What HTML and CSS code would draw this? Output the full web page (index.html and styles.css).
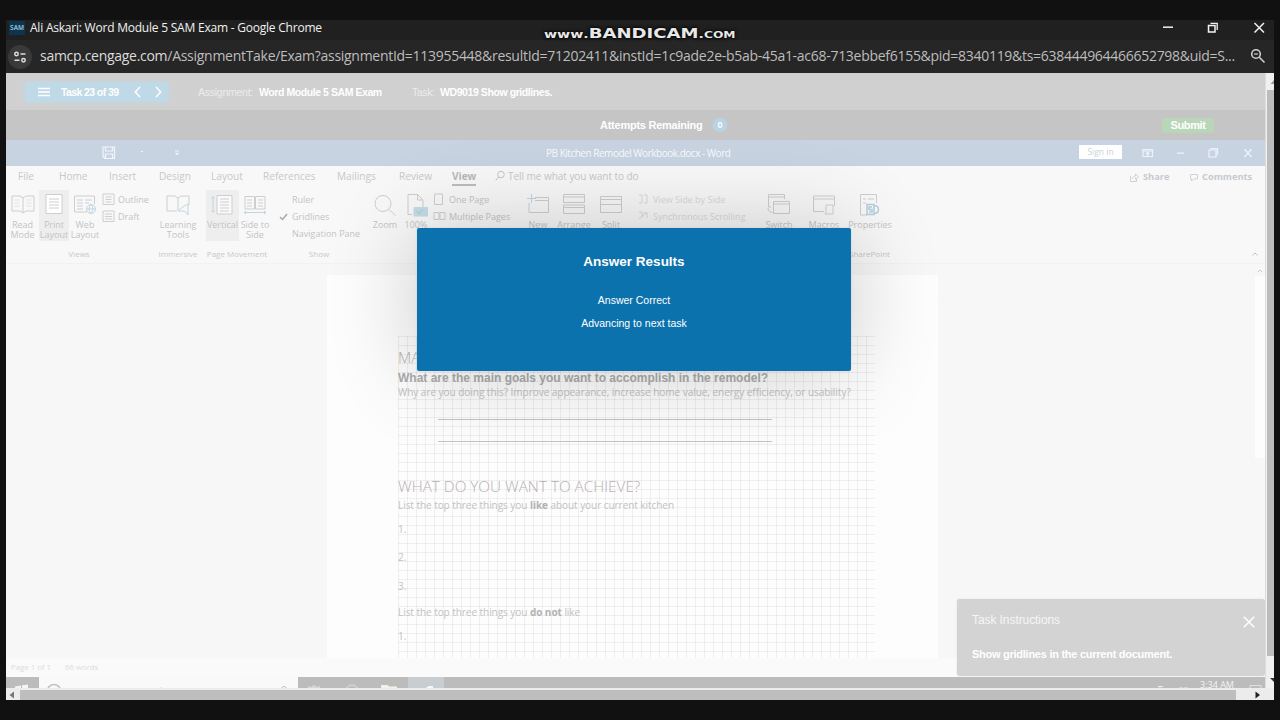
FILE: index.html
```html
<!DOCTYPE html>
<html lang="en">
<head>
<meta charset="utf-8">
<title>Ali Askari: Word Module 5 SAM Exam</title>
<link rel="stylesheet" href="styles.css">
</head>
<body>
<div class="window">
  <div class="titlebar">
    <span class="favicon">SAM</span>
    <span class="wintitle">Ali Askari: Word Module 5 SAM Exam - Google Chrome</span>
    <svg class="winctl" width="110" height="20" fill="none" stroke="#f2f2f2" stroke-width="1.5"><path d="M6 7.2h10"/><path d="M51.500 5.500h6.500v6.500h-6.500z"/><path d="M53.500 3.300h6.700v6.700" stroke-width="1.300"/><path d="M97.500 3l9.500 9.500M107 3l-9.500 9.500"/></svg>
  </div>
  <div class="addressbar">
    <span class="siteinfo"><svg width="14" height="14" fill="none" stroke="#ddd" stroke-width="1.500"><circle cx="3.500" cy="4" r="1.700"/><path d="M7.500 4h5M1.500 10.300h5"/><circle cx="10.500" cy="10.300" r="1.700"/></svg></span>
    <span class="url"><b>samcp.cengage.com</b>/AssignmentTake/Exam?assignmentId=113955448&amp;resultId=71202411&amp;instId=1c9ade2e-b5ab-45a1-ac68-713ebbef6155&amp;pid=8340119&amp;ts=638444964466652798&amp;uid=S...</span>
    <svg class="zoomout" width="16" height="16" fill="none" stroke="#cfcfcf" stroke-width="1.600"><circle cx="6" cy="6" r="4.300"/><path d="M9.300 9.300l5.200 5.200"/><path d="M4 6h4" stroke-width="1.200"/></svg>
  </div>
  <div class="viewport">
    <div class="content">
      <header class="taskbar">
        <div class="tasknav">
          <svg width="12" height="10" stroke="#fff" stroke-width="1.400"><path d="M0 1.500h12M0 5h12M0 8.500h12"/></svg>
          <b>Task 23 of 39</b>
          <svg width="28" height="12" fill="none" stroke="#fff" stroke-width="1.500"><path d="M6 1L1.300 6 6 11M22 1l4.700 5L22 11"/></svg>
        </div>
        <span class="t-label a1">Assignment:</span><b class="t-val v1">Word Module 5 SAM Exam</b>
        <span class="t-label a2">Task:</span><b class="t-val v2">WD9019 Show gridlines.</b>
      </header>
      <div class="attempts">
        <b class="att-text">Attempts Remaining</b><b class="att-num">0</b><b class="submit">Submit</b>
      </div>
      <div class="wordtitle">
        <svg class="save" width="80" height="14" fill="none" stroke="#f1f6fb" stroke-width="1.200"><path d="M1 1h11.500v11.500H3L1 10.500zM3.500 1v4h7V1M3.500 12.500V8h7v4.500"/><path d="M39 5.500h2M73 5h4M73.500 7l1.500 1.500L76.500 7"/></svg>
        <span class="docname">PB Kitchen Remodel Workbook.docx - Word</span>
        <span class="signin">Sign in</span>
        <svg class="wctl" width="112" height="12" fill="none" stroke="#eef3f9" stroke-width="1.200"><path d="M1 2.500h9.500v7H1zM1 4h9.500M5.700 9V5.500M4 7l1.700-1.700L7.400 7M35 6.200h7M67 3h7v7h-7zM69 3V1.500h6.500V8M102.500 2l7 8M109.500 2l-7 8"/></svg>
      </div>
      <nav class="tabs">
        <span>File</span><span>Home</span><span>Insert</span><span>Design</span><span>Layout</span><span>References</span><span>Mailings</span><span>Review</span><span class="active"><b>View</b></span>
        <span class="tell"><svg width="10" height="12" fill="none" stroke="#c4c6c6"><circle cx="6" cy="4.500" r="3.300"/><path d="M3.700 7L.7 10.500"/></svg>Tell me what you want to do</span>
        <b class="share"><svg width="9" height="9" fill="none" stroke="#ccd3dc"><path d="M.5 3v5.500h6V6M2.500 6c0-2 1-3 3-3V1l3 2.700-3 2.600V4.500"/></svg>Share</b>
        <b class="comments"><svg width="8" height="9" fill="none" stroke="#ccd3dc"><path d="M.5 1.500h7v4.500h-4l-2 2V6h-1z"/></svg>Comments</b>
      </nav>
      <div class="ribbon">
        <div class="btn w33"><svg width="24" height="22"><path d="M1 3h8l3 2 3-2h8v15h-8l-3 2-3-2H1zM12 5v15"/><path d="M3.500 7h5M3.500 10h5M3.500 13h5M15.500 7h5M15.500 10h5M15.500 13h5" class="lt"/></svg><span>Read<br>Mode</span></div>
        <div class="btn w30 sel"><svg width="24" height="22"><path d="M4 1.500h16v19H4z" fill="#fff"/><path d="M7 6h10M7 9h10M7 12h10M7 15h10"/></svg><span>Print<br>Layout</span></div>
        <div class="btn w32"><svg width="24" height="22"><path d="M14 19H1.500V3h20v8M4 7h6M4 10h6M4 13h6M4 16h6M12 7h7M12 10h4"/><circle cx="18" cy="16" r="4.500" class="bl"/><path d="M13.500 16h9M18 11.500c-2.500 3-2.500 6 0 9 2.500-3 2.500-6 0-9" class="bl"/></svg><span>Web<br>Layout</span></div>
        <div class="stack c1">
          <div><svg width="13" height="13"><path d="M1 1h11v10.500H1zM3.500 4h6M3.500 6.500h6M3.500 9h6" /></svg>Outline</div>
          <div><svg width="13" height="13"><path d="M1 1h11v10.500H1zM3 4h7M3 6.500h7M3 9h7"/></svg>Draft</div>
        </div>
        <div class="btn w36"><svg width="24" height="24"><path d="M1 3h8l3 2 3-2h8v9M1 3v15h10M12 5v12"/><path d="M22 11v11l-3.500-4H12l6-5z" class="bl"/></svg><span>Learning<br>Tools</span></div>
        <div class="btn w33 sel ml10"><svg width="24" height="22"><path d="M6 2.500h15v18.500H6z" fill="#fafafa"/><path d="M9 6h9M9 9h9M9 12h9M9 15h9M9 18h9"/><path d="M2 4v15M.5 5.500L2 3.500l1.500 2M.5 17.500l1.500 2 1.500-2" class="bl"/></svg><span>Vertical</span></div>
        <div class="btn w32"><svg width="24" height="22"><path d="M2 3.500h9.500v12.500H2zM12.500 3.500H22v12.500h-9.500zM4 7h5M4 10h5M4 13h5M15 7h5M15 10h5M15 13h5"/><path d="M1 19.500h22M3 18l-2 1.500L3 21M21 18l2 1.500-2 1.500" class="bl"/></svg><span>Side to<br>Side</span></div>
        <div class="checks">
          <div><svg width="9" height="9"></svg>Ruler</div>
          <div><svg width="9" height="9"><path d="M1 5l2.500 2.500L8 2" class="ck"/></svg>Gridlines</div>
          <div><svg width="9" height="9"></svg>Navigation Pane</div>
        </div>
        <div class="btn w26"><svg width="24" height="24"><circle cx="10" cy="10.500" r="8"/><path d="M16 16.500l6.500 6"/></svg><span>Zoom</span></div>
        <div class="btn w30 ml3"><svg width="24" height="24"><path d="M8 21.500H4v-20h9.500L19 7v7M13.500 1.500V7H19"/><path d="M10 14.500h14v8.500H10z" fill="#c3dce3" stroke="#c3dce3"/><path d="M13 18.500l2 2 4-4" stroke="#9ccbd6"/></svg><span>100%</span></div>
        <div class="stack c2">
          <div><svg width="13" height="13"><path d="M1.500 1h8v10.500h-8z"/></svg>One Page</div>
          <div><svg width="13" height="13"><path d="M1 2.500h5v7H1zM7 2.500h5v7H7z"/></svg>Multiple Pages</div>
        </div>
        <div class="btn w28"><svg width="24" height="24"><path d="M9 4.500h13.500v15H3V10M9 7.500h13.500"/><path d="M5.500 1v9M1 5.500h9" class="bl"/></svg><span>New</span></div>
        <div class="btn w36 ml4"><svg width="24" height="24"><path d="M1.500 1.500h21v8h-21zM1.500 12h21v8.500h-21zM1.500 4h21M1.500 14.500h21"/></svg><span>Arrange</span></div>
        <div class="btn w26 ml6"><svg width="24" height="24"><path d="M1.500 3.500h21v16h-21zM1.500 6.500h21M1.500 11.500h21"/></svg><span>Split</span></div>
        <div class="stack c3">
          <div><svg width="13" height="13"><path d="M2 2h3v8H2M7 2h3v8H7"/></svg>View Side by Side</div>
          <div><svg width="13" height="13"><path d="M2 2h3v5M7 3h3v5M2 9l8-7"/></svg>Synchronous Scrolling</div>
        </div>
        <div class="btn w30"><svg width="24" height="24"><path d="M4 14H1.500V1.500h16V6M1.500 4h16M6.500 8.500h16v12h-16zM6.500 11h16"/><path d="M1 15c0 3 2 4.500 4.500 4.500" class="bl"/></svg><span>Switch</span></div>
        <div class="btn w32 ml14"><svg width="24" height="24"><path d="M12 18.500H1.500V3h21v10M1.500 6h21"/><path d="M14 12h7v9h-8l1-2z" stroke="#d9cccc"/></svg><span>Macros</span></div>
        <div class="btn w44"><svg width="24" height="24"><path d="M9 22H2.500V1.500h16V10M5 6h3M10 6h6M5 10h3"/><path d="M9 11.500h7v10H9zM16 12.500c6 0 6 8 0 8M14 14h-3v2.500h3V19h-3" class="bl b2"/></svg><span>Properties</span></div>
      </div>
      <div class="groups">
        <span>Views</span><span>Immersive</span><span>Page Movement</span><span>Show</span><span class="sp">SharePoint</span>
        <svg width="8" height="6" fill="none" stroke="#c0c0c0"><path d="M1.500 4.500L4 2l2.500 2.500"/></svg>
      </div>
      <main class="canvas">
        <article class="page">
          <div class="gridarea">
            <h2 class="h-main">MAIN GOALS</h2>
            <h3>What are the main goals you want to accomplish in the remodel?</h3>
            <p class="why">Why are you doing this? Improve appearance, increase home value, energy efficiency, or usability?</p>
            <hr class="r1"><hr class="r2">
            <h2 class="h-ach">WHAT DO YOU WANT TO ACHIEVE?</h2>
            <p class="l1">List the top three things you <b>like</b> about your current kitchen</p>
            <p class="n1">1.</p><p class="n2">2.</p><p class="n3">3.</p>
            <p class="l2">List the top three things you <b>do not</b> like</p>
            <p class="n4">1.</p>
          </div>
        </article>
        <div class="docscroll"><svg width="10" height="10" fill="none" stroke="#c8c8c8"><path d="M3 6l2-2 2 2"/></svg><i></i></div>
      </main>
      <div class="status"><span>Page 1 of 1</span><span>66 words</span></div>
      <div class="ostask">
        <svg class="start" width="33" height="12"><path d="M9 9.500l6-1v4H9zM16 8.200l6-.8V12h-6z" fill="#f4f4f4"/></svg>
        <div class="search"><svg width="259" height="12" fill="none" stroke="#c2c2c2" stroke-width="1.500"><circle cx="15" cy="14" r="6.500"/><circle cx="245" cy="12" r="2.500" stroke-width="1"/><path d="M121 12l2-1" /></svg></div>
        <svg class="apps" width="200" height="12"><path d="M110 0h36v12h-36z" fill="#c7cdd1"/><path d="M10 9l3 1 3-2 3 2 3-1v3H10z" fill="#d8d8d8"/><circle cx="54" cy="14" r="6" fill="none" stroke="#cfd4d4" stroke-width="1.500"/><path d="M83 8h7l1 1.500h8V12H83z" fill="#f3f1e8"/><path d="M126 12l5-3h4v3z" fill="#f4fafc"/></svg>
        <svg class="tray" width="46" height="12" stroke="#ececec" fill="none"><path d="M2 9.500h5M4 9v3M23 11h4M28 11h4"/></svg>
        <span class="clock">3:34 AM</span>
        <svg width="16" height="12" fill="none" stroke="#e2e2e2"><path d="M3 12V8.500h11V12"/></svg>
      </div>
      <aside class="instr">
        <div class="instr-head"><span>Task Instructions</span><svg width="12" height="12" stroke="#fff" stroke-width="1.500"><path d="M.8.800l10.400 10.400M11.200.800L.8 11.200"/></svg></div>
        <b>Show gridlines in the current document.</b>
      </aside>
      <div class="modal" role="dialog">
        <h1>Answer Results</h1>
        <p>Answer Correct</p>
        <p>Advancing to next task</p>
      </div>
    </div>
    <div class="vscroll">
      <svg width="7" height="17"><path d="M3.500 11L7 7v4z" fill="#999"/></svg><i></i><svg width="7" height="32"><path d="M3 22h4v4z" fill="#333"/></svg>
    </div>
    <div class="hscroll">
      <svg width="14" height="10"><path d="M8 1.500v7L3.500 5z" fill="#777"/></svg><i></i><svg width="38" height="10"><path d="M19.500 1.500v7L24 5z" fill="#222"/></svg>
    </div>
  </div>
  <div class="bandicam"><span>www</span>.<b>BANDICAM</b>.<small>COM</small></div>
</div>
</body>
</html>
```
FILE: styles.css
```css
* { box-sizing: border-box; }
body { margin: 0; width: 1280px; height: 720px; overflow: hidden; background: #111; font-family: "Liberation Sans", Arial, sans-serif; padding: 20px 6px; }
svg { flex: none; display: block; }
h1, h2, h3, p, hr { margin: 0; }
.window { position: relative; width: 1268px; height: 680px; display: flex; flex-direction: column; }

.titlebar { height: 20px; background: #202020; display: flex; align-items: flex-start; color: #f0f0f0; font: 12px/15px "Open Sans", "Noto Sans", sans-serif; }
.favicon { width: 16px; height: 14px; margin: 1px 5px 0 3px; background: #0c3550; color: #a9cfe2; font-size: 6.500px; font-weight: 600; line-height: 14px; text-align: center; }
.wintitle { white-space: nowrap; letter-spacing: -.22px; }
.winctl { margin: 0 7px 0 auto; }
.addressbar { height: 33px; background: #262626; display: flex; align-items: center; color: #bdbdbd; font: 14px/20px "Open Sans", "Noto Sans", sans-serif; }
.siteinfo { width: 24px; height: 24px; margin: 0 8px 0 2px; border-radius: 50%; background: #3a3a3a; display: grid; place-items: center; }
.url { width: 1200px; margin-bottom: 1px; white-space: nowrap; letter-spacing: -.284px; }
.url b { font-weight: 400; color: #dcdcdc; }
.zoomout { margin: 0 0 2px 10px; }
.bandicam { position: absolute; left: 538px; top: 5px; height: 16px; display: flex; align-items: baseline; color: #e8e8e8; font: bold 11px/16px "DejaVu Sans", sans-serif; text-shadow: 0 0 3px #000, 0 0 3px #000; transform: scaleX(1.29); transform-origin: 0 0; }
.bandicam span { font-size: 11px; }
.bandicam b { font-size: 14px; }
.bandicam small { font-size: 9.500px; }

.viewport { flex: 1; display: grid; grid-template-columns: 1259px 9px; grid-template-rows: 615px 12px; background: #e8e8e8; }
.content { position: relative; display: flex; flex-direction: column; overflow: hidden; background: #f8f8f8; }
.taskbar { height: 37px; flex: none; background: #d0d0d0; display: flex; align-items: center; color: #fff; font-size: 10.500px; white-space: nowrap; }
.tasknav { width: 143px; height: 20px; margin-left: 19px; background: #c0d9e7; border-radius: 2px; box-shadow: 0 0 4px #c0d9e7; display: flex; align-items: center; padding-left: 13px; }
.tasknav b { width: 70px; margin-left: 11px; letter-spacing: -.6px; }
.tasknav svg:last-child { margin-left: 3px; }
.t-label { color: #ececec; }
.a1 { margin-left: 30px; width: 61px; letter-spacing: -.25px; }
.v1 { width: 153px; letter-spacing: -.43px; }
.a2 { width: 28px; letter-spacing: -.4px; }
.v2 { letter-spacing: -.42px; }
.attempts { height: 30px; flex: none; background: #c5c5c5; display: flex; align-items: center; color: #fff; font-size: 11px; white-space: nowrap; }
.att-text { margin-left: 594px; width: 113px; letter-spacing: -.25px; }
.att-num { width: 14px; height: 14px; border-radius: 50%; background: #b8d3e2; font-size: 9px; line-height: 14px; text-align: center; box-shadow: 0 0 2px #b8d3e2; }
.submit { margin-left: 435px; width: 52px; height: 15px; background: #b9d6b9; border-radius: 2px; line-height: 15px; text-align: center; letter-spacing: -.35px; }

.wordtitle { height: 26px; flex: none; background: #c8d3e2; display: flex; align-items: center; font: 10px/14px "Open Sans", sans-serif; color: #f6f9fc; white-space: nowrap; }
.save { margin-left: 96px; }
.docname { flex: none; margin-left: 364px; width: 184px; letter-spacing: -.48px; }
.signin { flex: none; margin: 0 20px 2px 349px; width: 43px; height: 14px; background: #fff; color: #ccd2da; text-align: center; font-size: 8.500px; }
.tabs { height: 22px; flex: none; display: grid; grid-template-columns: 41px 50px 50px 52px 52px 74px 62px 53px 43px 635px 60px 80px; padding-left: 12px; align-items: start; color: #c8c8c8; font: 10.100px/20px "Open Sans", sans-serif; white-space: nowrap; }
.tabs svg { display: inline-block; vertical-align: -2px; }
.tell { letter-spacing: -.08px; }
.tell svg { margin-right: 3px; }
.active b { color: #b8b8b8; display: inline-block; height: 20px; border-bottom: 2px solid #bdbdbd; }
.share, .comments { color: #c6cad0; font-size: 9.300px; line-height: 22px; }
.share svg, .comments svg { margin-right: 4px; }

.ribbon { height: 58px; flex: none; display: flex; align-items: flex-start; padding-top: 2px; color: #c4c4c4; font: 9px/10px "Open Sans", sans-serif; white-space: nowrap; }
.ribbon svg { fill: none; stroke: #cecece; }
.ribbon .lt { stroke: #e2e2e2; }
.ribbon .bl { stroke: #c0d6df; }
.ribbon .b2 { stroke: #b4cfdb; stroke-width: 1.500; }
.ribbon .ck { stroke: #a8a8a8; stroke-width: 1.500; }
.btn { flex: none; height: 51px; padding-top: 3px; display: flex; flex-direction: column; align-items: center; text-align: center; }
.btn svg { height: 24px; margin-bottom: 3px; }
.btn.sel { background: #eee; }
.w26 { width: 26px; } .w28 { width: 28px; } .w30 { width: 30px; } .w32 { width: 32px; } .w33 { width: 33px; } .w36 { width: 36px; } .w44 { width: 44px; margin-left: 8px; }
.ml3 { margin-left: 3px; } .ml4 { margin-left: 4px; } .ml6 { margin-left: 6px; } .ml10 { margin-left: 10px; } .ml14 { margin-left: 14px; }
.stack { flex: none; padding-top: 1px; }
.stack div { height: 17px; display: flex; align-items: center; gap: 3px; }
.c1 { width: 59px; padding-left: 1px; }
.c2 { width: 93px; padding-left: 2px; }
.c3 { width: 140px; padding-left: 13px; color: #d9d9d9; }
.c3 svg { stroke: #dadada; }
.checks { width: 101px; flex: none; padding: 1px 0 0 8px; }
.checks div { height: 17px; display: flex; align-items: center; gap: 4px; }
.groups { height: 15px; margin-bottom: 2px; flex: none; display: grid; grid-template-columns: 146px 52px 66px 98px 1fr 8px; padding: 0 6px 0 0; color: #c8c8c8; font: 8px/15px "Open Sans", sans-serif; text-align: center; white-space: nowrap; align-items: center; }
.groups .sp { text-align: left; padding-left: 481px; }

.canvas { height: 395px; flex: none; border-top: 1px solid #f2f2f2; background: #f7f7f7; display: flex; padding: 11px 0 0 321px; }
.page { width: 611px; height: 383px; padding: 61px 0 0 71px; background: #fdfdfd; }
.gridarea { width: 477px; height: 322px; padding-top: 11px; background: repeating-linear-gradient(90deg, rgba(0,0,0,.055) 0 1px, transparent 1px 9px), repeating-linear-gradient(rgba(0,0,0,.05) 0 1px, transparent 1px 9px); color: #c2c2c2; font: 10px/14px "Open Sans", sans-serif; white-space: nowrap; }
.gridarea p { height: 14px; letter-spacing: -.05px; }
.gridarea .why { letter-spacing: -.03px; }
.gridarea b { color: #b2b2b2; }
.gridarea h2 { font: 15.300px/20px "Open Sans", sans-serif; font-weight: 300; color: #b8b0b0; }
.gridarea h3 { margin-top: 4px; font: bold 12px/14px "Liberation Sans", sans-serif; color: #acacac; }
.gridarea hr { width: 334px; height: 1px; border: 0; background: #c4c4c4; margin-left: 40px; }
.gridarea .r1 { margin-top: 20px; }
.gridarea .r2 { margin-top: 21px; }
.gridarea .h-ach { margin-top: 34px; }
.l1 { margin-top: 2px; } .n1 { margin-top: 10px; } .n2 { margin-top: 14px; } .n3 { margin-top: 15px; } .l2 { margin-top: 12px; } .n4 { margin-top: 10px; }
.docscroll { width: 10px; margin: -9px 0 0 317px; }
.docscroll i { display: block; height: 182px; background: #fdfdfd; }
.status { height: 19px; flex: none; display: flex; gap: 14px; padding-left: 5px; background: #fafafa; color: #dcdcdc; font: 7.800px/18px "Open Sans", sans-serif; }
.ostask { height: 12px; flex: none; display: flex; background: #bcbcbc; overflow: hidden; }
.search { width: 259px; background: #f9f9f9; }
.tray { margin-left: 658px; }
.clock { width: 39px; color: #f4f4f4; font: 9px/16px "Open Sans", sans-serif; white-space: nowrap; margin: 0 8px 0 -2px; }

.instr { position: absolute; left: 951px; top: 526px; width: 308px; height: 77px; padding: 15px 10px 0 15px; background: #d3d3d3; border-radius: 3px; color: #fff; font-size: 11px; line-height: 13px; letter-spacing: -.26px; box-shadow: 0 0 2px #ddd; }
.instr-head { display: flex; justify-content: space-between; align-items: flex-start; margin-bottom: 20px; font-size: 12px; letter-spacing: -.08px; color: #f6f6f6; }
.instr-head svg { margin-top: 2px; }
.modal { position: absolute; left: 411px; top: 155px; width: 434px; height: 143px; padding-top: 25px; border-radius: 2px; background: #0b72ad; color: #fff; text-align: center; font-size: 10.500px; line-height: 23px; box-shadow: 0 0 90px rgba(0,0,0,.2), 0 0 2px rgba(200,225,245,.8); }
.modal h1 { margin-bottom: 19px; font-size: 13.500px; line-height: 17px; }

.vscroll { width: 9px; display: flex; flex-direction: column; padding-left: 1px; background: #f0f0f0; border-left: 1px solid #ddd; }
.vscroll i { flex: 1; background: #bcbcbc; }
.hscroll { grid-column: 1 / 3; display: flex; padding-top: 2px; background: #ececec; }
.hscroll i { flex: 1; background: #bebebe; }
```
